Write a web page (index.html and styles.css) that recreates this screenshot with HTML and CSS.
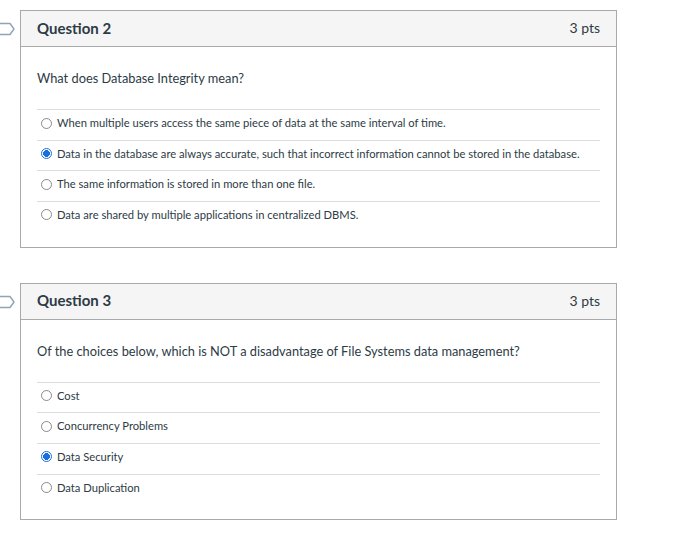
FILE: index.html
```html
<!DOCTYPE html>
<html>
<head>
<meta charset="utf-8">
<link rel="stylesheet" href="styles.css">
</head>
<body>
<div class="page">
  <div class="card">
    <svg class="flag" width="16" height="14" viewBox="0 0 16 14"><path d="M-2 1.5 H10 L14 7 L10 12.5 H-2" fill="none" stroke="#8fa3b8" stroke-width="1.4" stroke-linejoin="round"/></svg>
    <div class="head"><span class="title">Question 2</span><span class="pts">3 pts</span></div>
    <div class="body">
      <p class="q">What does Database Integrity mean?</p>
      <div class="answers">
        <div class="ans"><span class="radio"></span>When multiple users access the same piece of data at the same interval of time.</div>
        <div class="ans"><span class="radio on"></span>Data in the database are always accurate, such that incorrect information cannot be stored in the database.</div>
        <div class="ans"><span class="radio"></span>The same information is stored in more than one file.</div>
        <div class="ans"><span class="radio"></span>Data are shared by multiple applications in centralized DBMS.</div>
      </div>
    </div>
  </div>
  <div class="card">
    <svg class="flag" width="16" height="14" viewBox="0 0 16 14"><path d="M-2 1.5 H10 L14 7 L10 12.5 H-2" fill="none" stroke="#8fa3b8" stroke-width="1.4" stroke-linejoin="round"/></svg>
    <div class="head"><span class="title">Question 3</span><span class="pts">3 pts</span></div>
    <div class="body">
      <p class="q">Of the choices below, which is NOT a disadvantage of File Systems data management?</p>
      <div class="answers">
        <div class="ans"><span class="radio"></span>Cost</div>
        <div class="ans"><span class="radio"></span>Concurrency Problems</div>
        <div class="ans"><span class="radio on"></span>Data Security</div>
        <div class="ans"><span class="radio"></span>Data Duplication</div>
      </div>
    </div>
  </div>
</div>
</body>
</html>
```
FILE: styles.css
```css
* { box-sizing: border-box; }
body {
  margin: 0;
  background: #fff;
  font-family: Lato, "Open Sans", sans-serif;
  color: #2d3b45;
}
.page {
  padding: 10px 0 0 20px;
  display: flex;
  flex-direction: column;
  gap: 35px;
}
.card {
  position: relative;
  width: 597px;
  border: 1px solid #a9a9a9;
  background: #fff;
}
.flag {
  position: absolute;
  left: -21px;
  top: 11px;
}
.head {
  height: 36px;
  background: #f5f5f5;
  border-bottom: 1px solid #a9a9a9;
  display: flex;
  align-items: center;
  justify-content: space-between;
  padding: 0 16px 2px 16px;
}
.title {
  font-weight: 700;
  font-size: 15px;
  color: #2d3b45;
}
.pts {
  font-size: 14px;
  color: #2d3b45;
}
.body {
  padding: 21px 16px 15px 16px;
}
.q {
  margin: 0 0 21px 0;
  font-size: 12.8px;
  line-height: 20px;
}
.ans {
  border-top: 1px solid #dcdcdc;
  display: flex;
  align-items: center;
  padding: 6px 0 9.67px 4px;
  font-size: 11.2px;
  line-height: 14px;
}
.radio {
  width: 11px;
  height: 11px;
  border-radius: 50%;
  border: 1px solid #8a8a8a;
  background: #fff;
  margin-right: 5px;
  flex: none;
}
.radio.on {
  border: 1px solid #1a6fdf;
  background: radial-gradient(circle, #1a6fdf 0 3.2px, #fff 3.6px);
}
```
